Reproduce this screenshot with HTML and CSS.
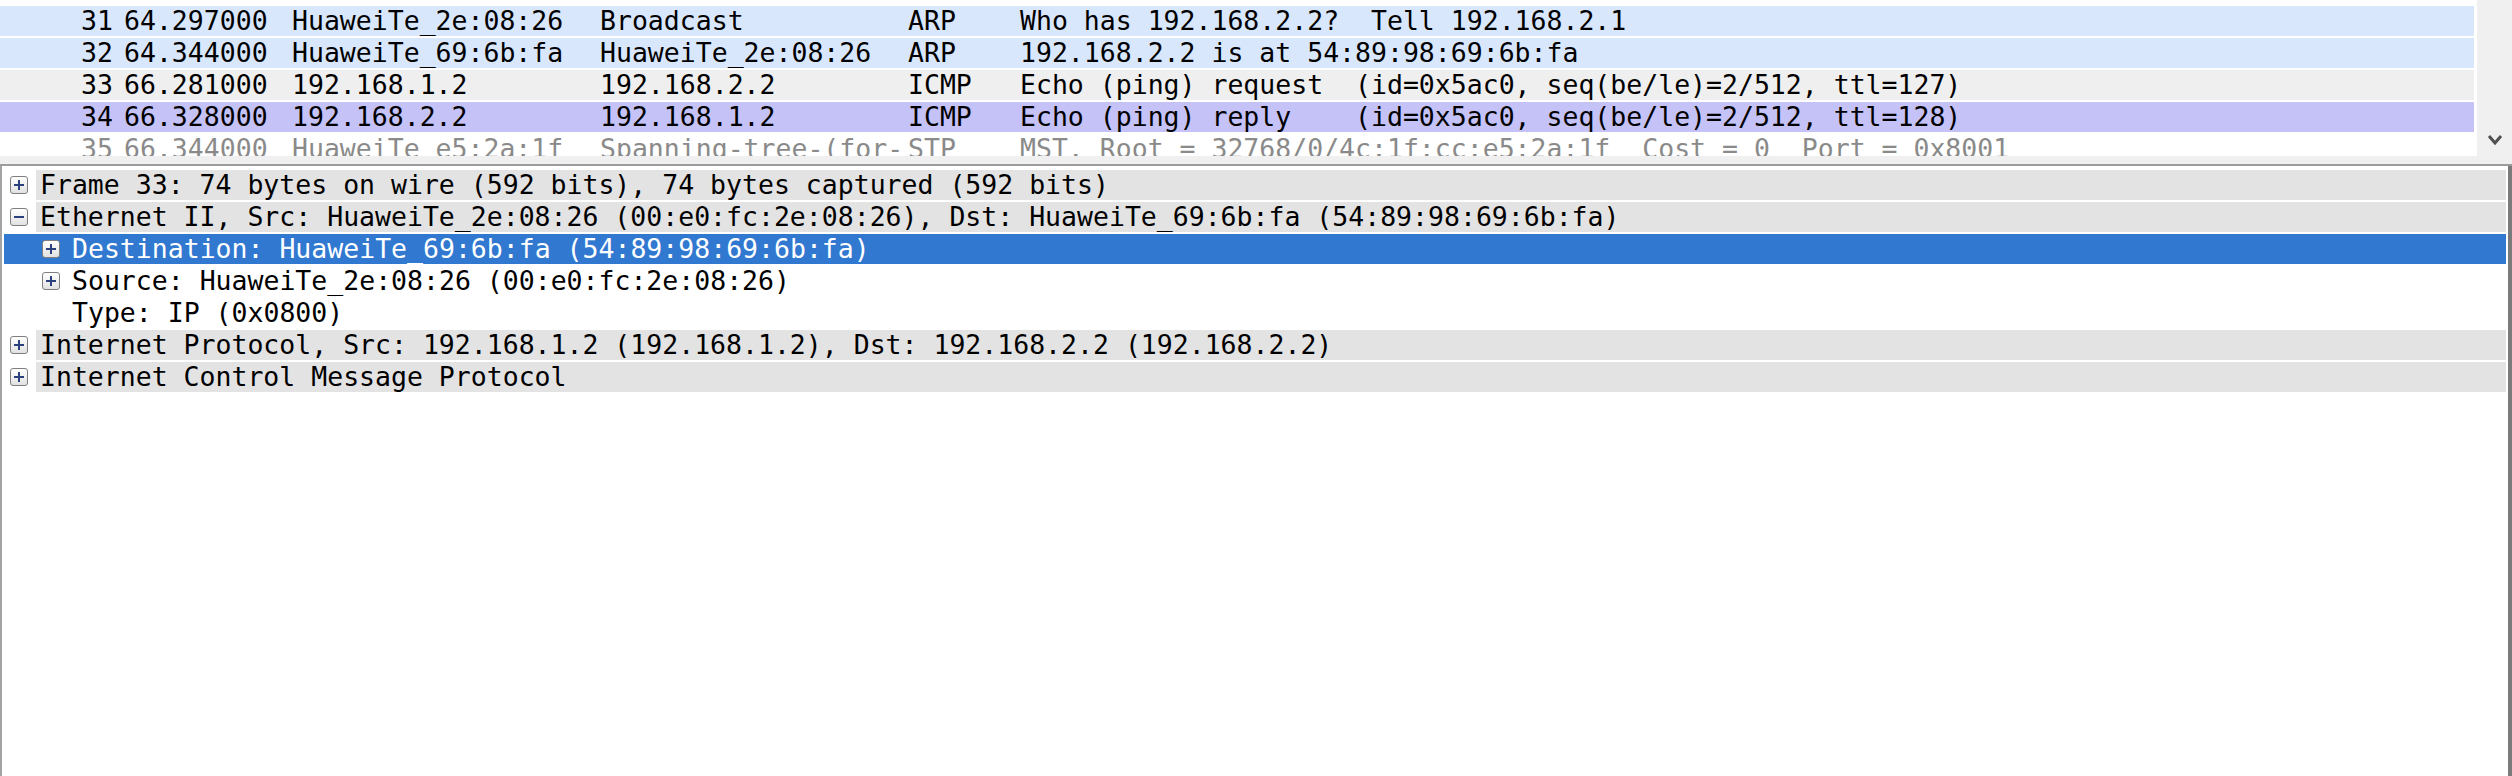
FILE: index.html
```html
<!DOCTYPE html>
<html>
<head>
<meta charset="utf-8">
<link rel="stylesheet" href="styles.css">
</head>
<body>
<div class="app">
  <div class="top">
    <div class="plist">
      <div class="plist-inner">
        <div class="prow arp"><span class="no">31</span><span>64.297000</span><span>HuaweiTe_2e:08:26</span><span>Broadcast</span><span>ARP</span><span>Who has 192.168.2.2?  Tell 192.168.2.1</span></div>
        <div class="prow arp"><span class="no">32</span><span>64.344000</span><span>HuaweiTe_69:6b:fa</span><span>HuaweiTe_2e:08:26</span><span>ARP</span><span>192.168.2.2 is at 54:89:98:69:6b:fa</span></div>
        <div class="prow req"><span class="no">33</span><span>66.281000</span><span>192.168.1.2</span><span>192.168.2.2</span><span>ICMP</span><span>Echo (ping) request  (id=0x5ac0, seq(be/le)=2/512, ttl=127)</span></div>
        <div class="prow rep"><span class="no">34</span><span>66.328000</span><span>192.168.2.2</span><span>192.168.1.2</span><span>ICMP</span><span>Echo (ping) reply    (id=0x5ac0, seq(be/le)=2/512, ttl=128)</span></div>
        <div class="prow stp"><span class="no">35</span><span>66.344000</span><span>HuaweiTe_e5:2a:1f</span><span>Spanning-tree-(for-</span><span>STP</span><span>MST. Root = 32768/0/4c:1f:cc:e5:2a:1f  Cost = 0  Port = 0x8001</span></div>
      </div>
    </div>
    <div class="vscroll">
      <svg class="chev" width="16" height="12" viewBox="0 0 16 12"><polyline points="2,2 8,9 14,2" fill="none" stroke="#505050" stroke-width="3"/></svg>
    </div>
  </div>
  <div class="hband"></div>
  <div class="splitter"></div>
  <div class="details">
    <div class="node top"><div class="exp"><span class="box plus"></span></div><div class="label">Frame 33: 74 bytes on wire (592 bits), 74 bytes captured (592 bits)</div></div>
    <div class="node top"><div class="exp"><span class="box minus"></span></div><div class="label">Ethernet II, Src: HuaweiTe_2e:08:26 (00:e0:fc:2e:08:26), Dst: HuaweiTe_69:6b:fa (54:89:98:69:6b:fa)</div></div>
    <div class="node sel"><div class="indent"></div><div class="exp"><span class="box plus"></span></div><div class="label">Destination: HuaweiTe_69:6b:fa (54:89:98:69:6b:fa)</div></div>
    <div class="node"><div class="indent"></div><div class="exp"><span class="box plus"></span></div><div class="label">Source: HuaweiTe_2e:08:26 (00:e0:fc:2e:08:26)</div></div>
    <div class="node"><div class="indent"></div><div class="exp"></div><div class="label">Type: IP (0x0800)</div></div>
    <div class="node top"><div class="exp"><span class="box plus"></span></div><div class="label">Internet Protocol, Src: 192.168.1.2 (192.168.1.2), Dst: 192.168.2.2 (192.168.2.2)</div></div>
    <div class="node top"><div class="exp"><span class="box plus"></span></div><div class="label">Internet Control Message Protocol</div></div>
  </div>
</div>
</body>
</html>
```
FILE: styles.css
```css
html, body {
  margin: 0;
  padding: 0;
  background: #ffffff;
}
body {
  width: 2512px;
  height: 776px;
  overflow: hidden;
  font-family: "DejaVu Sans Mono", "Liberation Mono", monospace;
  font-size: 26.5px;
  color: #000;
}
.app {
  display: flex;
  flex-direction: column;
  height: 776px;
}
.top {
  display: flex;
  height: 156px;
  flex: none;
}
.plist {
  flex: 1;
  overflow: hidden;
  background: #fff;
  padding-right: 3px;
}
.plist-inner {
  padding-top: 6px;
}
.prow {
  display: grid;
  grid-template-columns: 118px 168px 308px 308px 112px 1fr;
  height: 30px;
  line-height: 30px;
  margin-bottom: 2px;
  white-space: pre;
  overflow: hidden;
}
.prow span {
  overflow: hidden;
  padding-left: 6px;
}
.prow .no {
  text-align: right;
  padding: 0 5px 0 0;
}
.prow.arp { background: #d9e7fc; }
.prow.req { background: #efefef; }
.prow.rep { background: #c4c2f7; }
.prow.stp { background: #fff; color: #8a8a8a; }
.vscroll {
  width: 35px;
  flex: none;
  background: #f0f0f0;
  display: flex;
  align-items: flex-end;
  justify-content: center;
  padding-bottom: 10px;
  box-sizing: border-box;
}
.hband {
  height: 8px;
  background: #f0f0f0;
  flex: none;
}
.splitter {
  height: 2px;
  background: #9c9c9c;
  flex: none;
}
.details {
  flex: 1;
  border-left: 2px solid #a4a4a4;
  border-right: 4px solid #7b7b7b;
  padding: 4px 2px 0 2px;
  background: #fff;
}
.node {
  display: flex;
  height: 30px;
  line-height: 30px;
  margin-bottom: 2px;
  white-space: pre;
}
.node.sel {
  background: #3078d0;
  color: #fff;
}
.indent {
  width: 32px;
  flex: none;
}
.exp {
  width: 32px;
  flex: none;
  display: flex;
  align-items: center;
  padding-left: 6px;
  box-sizing: border-box;
}
.label {
  flex: 1;
  padding-left: 4px;
}
.node.top .label {
  background: #e3e3e3;
}
.box {
  position: relative;
  width: 18px;
  height: 18px;
  box-sizing: border-box;
  border: 1px solid #7f7f7f;
  border-radius: 3px;
  background: linear-gradient(#ffffff, #e2e2e2);
}
.box::before {
  content: "";
  position: absolute;
  left: 3px;
  top: 7px;
  width: 10px;
  height: 2px;
  background: #2c3f7e;
}
.box.plus::after {
  content: "";
  position: absolute;
  left: 7px;
  top: 3px;
  width: 2px;
  height: 10px;
  background: #2c3f7e;
}
```
